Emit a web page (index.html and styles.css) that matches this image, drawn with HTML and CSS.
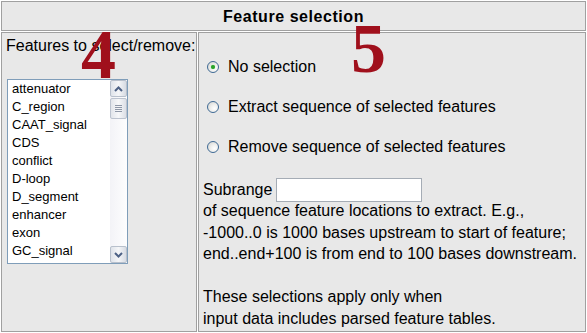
FILE: index.html
```html
<!DOCTYPE html>
<html>
<head>
<meta charset="utf-8">
<title>Feature selection</title>
<link rel="stylesheet" href="styles.css">
</head>
<body>
<div class="panel">
  <div class="head">Feature selection</div>
  <div class="left">
    <div class="label">Features to select/remove:</div>
    <div class="listbox">
      <ul class="items">
        <li>attenuator</li>
        <li>C_region</li>
        <li>CAAT_signal</li>
        <li>CDS</li>
        <li>conflict</li>
        <li>D-loop</li>
        <li>D_segment</li>
        <li>enhancer</li>
        <li>exon</li>
        <li>GC_signal</li>
      </ul>
      <div class="scrollbar">
        <div class="sbtn">
          <svg width="9" height="6" viewBox="0 0 9 6"><path d="M1 5 L4.5 1.5 L8 5" fill="none" stroke="#4d6185" stroke-width="2"/></svg>
        </div>
        <div class="track">
          <div class="thumb"><span class="grip"></span></div>
        </div>
        <div class="sbtn">
          <svg width="9" height="6" viewBox="0 0 9 6"><path d="M1 1 L4.5 4.5 L8 1" fill="none" stroke="#4d6185" stroke-width="2"/></svg>
        </div>
      </div>
    </div>
  </div>
  <div class="right">
    <div class="opt"><span class="radio checked"></span>No selection</div>
    <div class="opt"><span class="radio"></span>Extract sequence of selected features</div>
    <div class="opt"><span class="radio"></span>Remove sequence of selected features</div>
    <div class="sub">Subrange <span class="field"></span></div>
    <div class="notes">of sequence feature locations to extract. E.g.,<br>-1000..0 is 1000 bases upstream to start of feature;<br>end..end+100 is from end to 100 bases downstream.<br><br>These selections apply only when<br>input data includes parsed feature tables.</div>
  </div>
  <div class="mark mark4">4</div>
  <div class="mark mark5">5</div>
</div>
</body>
</html>
```
FILE: styles.css
```css
html, body {
  margin: 0;
  padding: 0;
  background: #ffffff;
}
body {
  font-family: "Liberation Sans", Arial, sans-serif;
  font-size: 16px;
  color: #000;
}
.panel {
  position: relative;
  width: 587px;
  height: 333px;
  box-sizing: border-box;
  padding: 1px;
  display: grid;
  grid-template-columns: 196px 388px;
  grid-template-rows: 30px 300px;
  gap: 1px;
}
.head, .left, .right {
  background: #e8e8e8;
  border: 1px solid #a0a0a0;
  box-sizing: border-box;
}
.head {
  grid-column: 1 / 3;
  display: flex;
  align-items: center;
  justify-content: center;
  font-weight: bold;
  letter-spacing: 0.55px;
  padding-top: 1px;
}
.left {
  padding: 3px 0 0 4px;
}
.label {
  line-height: 20px;
  white-space: nowrap;
}
.listbox {
  margin: 23px 0 0 1px;
  width: 121px;
  height: 185px;
  box-sizing: border-box;
  border: 1px solid #7f9db9;
  background: #fff;
  display: flex;
}
.items {
  list-style: none;
  margin: 0;
  padding: 0 0 0 4px;
  flex: 1;
  font-size: 13px;
  overflow: hidden;
}
.items li {
  height: 18px;
  line-height: 18px;
  white-space: nowrap;
}
.scrollbar {
  width: 17px;
  display: flex;
  flex-direction: column;
  background: linear-gradient(to right, #f3f3f7, #fdfdfe);
}
.sbtn {
  height: 17px;
  box-sizing: border-box;
  border: 1px solid #b8c0cc;
  border-radius: 2px;
  background: linear-gradient(to right, #dfe3ea, #f5f6f8 50%, #d7dbe3);
  display: flex;
  align-items: center;
  justify-content: center;
}
.track {
  flex: 1;
  padding-top: 1px;
}
.thumb {
  height: 21px;
  box-sizing: border-box;
  border: 1px solid #bcc3cf;
  border-radius: 2px;
  background: linear-gradient(to right, #e2e5eb, #f6f7f9 50%, #dcdfe6);
  display: flex;
  align-items: center;
  justify-content: center;
}
.grip {
  width: 7px;
  height: 7px;
  background: repeating-linear-gradient(to bottom, #8e97a7 0 1px, transparent 1px 2px);
}
.right {
  padding: 14px 0 0 4px;
}
.opt {
  height: 40px;
  display: flex;
  align-items: center;
  padding-left: 4px;
  white-space: nowrap;
}
.radio {
  width: 12px;
  height: 12px;
  box-sizing: border-box;
  border-radius: 50%;
  border: 1px solid #3f6a95;
  background: radial-gradient(circle at 65% 65%, #ffffff 0, #f0f0ee 40%, #d0d0cc 100%);
  margin-right: 9px;
  display: flex;
  align-items: center;
  justify-content: center;
}
.radio.checked::after {
  content: "";
  width: 4px;
  height: 4px;
  border-radius: 50%;
  background: #2aa12a;
  box-shadow: 0 0 1px #5ad05a;
}
.sub {
  margin-top: 11px;
  height: 24px;
  display: flex;
  align-items: center;
}
.field {
  display: inline-block;
  width: 146px;
  height: 24px;
  box-sizing: border-box;
  border: 1px solid #a5acb5;
  background: #fff;
  margin-left: 4px;
}
.notes {
  margin-top: -2px;
  line-height: 21.5px;
  white-space: nowrap;
}
.mark {
  position: absolute;
  font-family: "Liberation Serif", "Times New Roman", serif;
  font-weight: bold;
  font-size: 70px;
  line-height: 1;
  color: #a0101c;
}
.mark4 {
  left: 81px;
  top: 20px;
}
.mark5 {
  left: 351px;
  top: 14px;
}
```
